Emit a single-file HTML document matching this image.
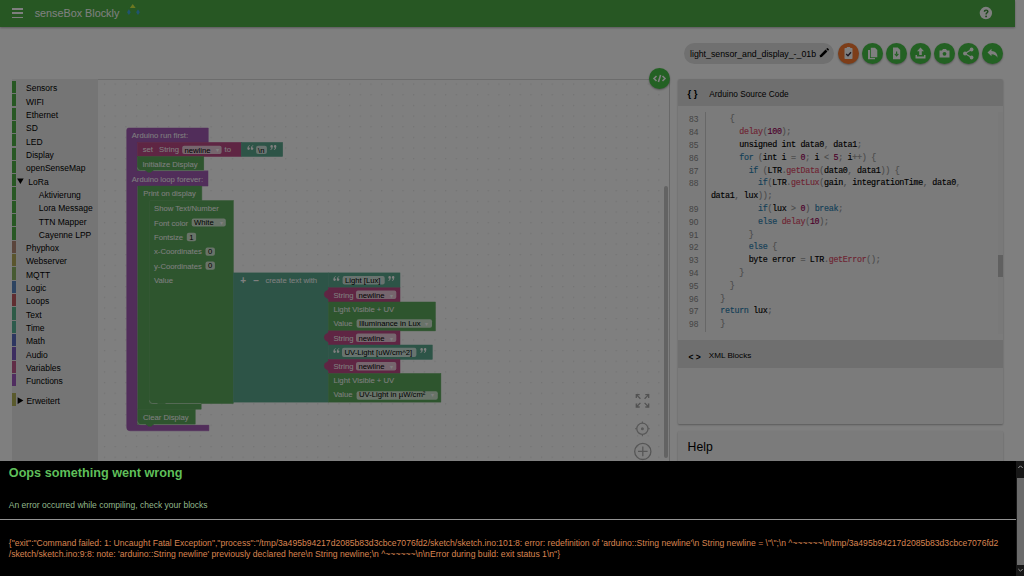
<!DOCTYPE html><html><head><meta charset="utf-8"><style>
*{box-sizing:border-box;margin:0;padding:0}
html,body{width:1024px;height:576px;overflow:hidden;background:#fff;font-family:"Liberation Sans",sans-serif;position:relative}
.t{position:absolute;white-space:nowrap}
.a{position:absolute}
#hdr{position:absolute;left:0;top:0;width:1015px;height:26.6px;background:#4eaf47;box-shadow:0 1px 2px rgba(0,0,0,.3)}
.ham{position:absolute;left:12px;width:11px;height:1.6px;background:#fff}
.fab{position:absolute;top:42.7px;width:21px;height:21px;border-radius:50%;background:#47c247;box-shadow:0 1px 2px rgba(0,0,0,.35)}
.fab svg{position:absolute;left:0;top:0}
#pill{position:absolute;left:684px;top:42.7px;width:150px;height:21px;border-radius:11px;background:#e0e0e0}
#tb{position:absolute;left:11.5px;top:79.3px;width:86.5px;height:382px;background:#eaeaea}
.cat{position:absolute;left:12px;width:4px;height:12.3px}
#ws{position:absolute;left:98px;top:79px;width:572px;height:382px;background:#fff;border-top:1px solid #d8d8d8;border-right:1px solid #d0d0d0}
.card{position:absolute;background:#f6f6f6;box-shadow:0 1px 2px rgba(0,0,0,.3);border-radius:1px}
.code{font-family:"Liberation Mono",monospace;font-size:8.4px;letter-spacing:-0.32px;color:#000;-webkit-text-stroke:0.15px currentColor}
.ln{font-family:"Liberation Sans",sans-serif;font-size:8.4px;color:#8a8a8a;text-align:right;width:20.3px}
.kw{color:#2a80b0}.fn{color:#dd4a68}.nm{color:#990055}.pu{color:#999}.op{color:#999}
#overlay{position:absolute;left:0;top:0;width:1024px;height:576px;background:rgba(0,0,0,.5)}
#modal{position:absolute;left:0;top:461px;width:1024px;height:115px;background:#000}
</style></head><body>
<div id="hdr">
<div class="ham" style="top:8.1px"></div>
<div class="ham" style="top:12.3px"></div>
<div class="ham" style="top:16.5px"></div>
</div>
<div class="t " style="left:34.70px;top:3.20px;font-size:10.8px;color:#fff;line-height:20px;">senseBox Blockly</div>
<svg class="a" style="left:120px;top:0px" width="24" height="20" viewBox="0 0 24 20"><polygon points="9.9,8.1 15.6,8.1 12.75,3.9" fill="#d8f040"/><polygon points="8.9,9.3 10.7,12.2 8.9,15.1 7.1,12.2" fill="#40a8e0"/><polygon points="18,9.3 19.8,12.2 18,15.1 16.2,12.2" fill="#40a8e0"/></svg>
<svg class="a" style="left:976px;top:3px" width="20" height="20" viewBox="0 0 20 20"><circle cx="9.9" cy="10.05" r="6.2" fill="#fff"/><path d="M7.6 8.6 Q7.6 6.4 10.1 6.4 Q12.6 6.5 12.6 8.5 Q12.6 9.7 11.3 10.4 Q10.8 10.8 10.8 11.6 L9.4 11.6 Q9.3 10.2 10.3 9.6 Q11 9.2 11 8.6 Q11 7.8 10.1 7.8 Q9.2 7.8 9.2 8.9 Z" fill="#3f8f3a"/><circle cx="10.1" cy="13.4" r="0.95" fill="#3f8f3a"/></svg>
<div id="pill"></div>
<div class="t " style="left:690.00px;top:43.50px;font-size:8.75px;color:#000;line-height:20px;">light_sensor_and_display_-_01b</div>
<svg class="a" style="left:818px;top:47px" width="12" height="12" viewBox="0 0 12 12"><path d="M2 8.2 L7.6 2.6 L9.4 4.4 L3.8 10 L1.8 10.2 Z" fill="#000"/><path d="M8.2 2 L9 1.2 Q9.4 0.9 9.8 1.2 L10.8 2.2 Q11.1 2.6 10.8 3 L10 3.8 Z" fill="#000"/></svg>
<div class="fab" style="left:838.0px;background:#fa7a30"><svg width="21" height="21" viewBox="0 0 21 21"><rect x="6.5" y="5" width="8" height="11" rx="0.8" fill="#fff"/><rect x="8.8" y="4" width="3.4" height="2" rx="0.5" fill="#fff"/><path d="M8.2 11 L10 12.8 L13 9.3" stroke="#3a2d3f" stroke-width="1.4" fill="none"/></svg></div>
<div class="fab" style="left:862.0px;background:#47c247"><svg width="21" height="21" viewBox="0 0 21 21"><path d="M6 7 L8 7 L8 15 L13 15 L13 16.3 L6 16.3 Z" fill="#fff"/><path d="M8.8 4.7 L13 4.7 L15.3 7 L15.3 14.2 L8.8 14.2 Z" fill="#fff"/></svg></div>
<div class="fab" style="left:886.0px;background:#47c247"><svg width="21" height="21" viewBox="0 0 21 21"><path d="M7 4.5 L11.8 4.5 L14.2 7 L14.2 16.3 L7 16.3 Z" fill="#fff"/><path d="M10.6 8.5 L10.6 11.5 M8.8 10.8 L10.6 12.8 L12.4 10.8" stroke="#47c247" stroke-width="1.2" fill="none"/></svg></div>
<div class="fab" style="left:910.0px;background:#47c247"><svg width="21" height="21" viewBox="0 0 21 21"><path d="M10.5 4.5 L14 8.2 L11.8 8.2 L11.8 12 L9.2 12 L9.2 8.2 L7 8.2 Z" fill="#fff"/><path d="M5.5 12 L7 12 L7 13.6 L14 13.6 L14 12 L15.5 12 L15.5 15.5 L5.5 15.5 Z" fill="#fff"/></svg></div>
<div class="fab" style="left:934.0px;background:#47c247"><svg width="21" height="21" viewBox="0 0 21 21"><path d="M5.5 7.5 L8 7.5 L9 6 L12 6 L13 7.5 L15.5 7.5 L15.5 14.5 L5.5 14.5 Z" fill="#fff"/><circle cx="10.5" cy="10.8" r="1.9" fill="#47c247"/></svg></div>
<div class="fab" style="left:958.0px;background:#47c247"><svg width="21" height="21" viewBox="0 0 21 21"><circle cx="13.6" cy="6.5" r="1.9" fill="#fff"/><circle cx="7" cy="10.5" r="1.9" fill="#fff"/><circle cx="13.6" cy="14.5" r="1.9" fill="#fff"/><path d="M13.6 6.5 L7 10.5 L13.6 14.5" stroke="#fff" stroke-width="1.3" fill="none"/></svg></div>
<div class="fab" style="left:982.0px;background:#47c247"><svg width="21" height="21" viewBox="0 0 21 21"><path d="M5.5 9.5 L9.5 5.8 L9.5 8 Q15.5 8 15.5 14.8 Q13.8 11.2 9.5 11.2 L9.5 13.3 Z" fill="#fff"/></svg></div>
<div id="tb"></div>
<div class="cat" style="top:80.85px;background:#4eaf47"></div>
<div class="t " style="left:26.00px;top:78.20px;font-size:8.5px;color:#000;line-height:20px;">Sensors</div>
<div class="cat" style="top:94.18px;background:#4eaf47"></div>
<div class="t " style="left:26.00px;top:91.53px;font-size:8.5px;color:#000;line-height:20px;">WIFI</div>
<div class="cat" style="top:107.51px;background:#4eaf47"></div>
<div class="t " style="left:26.00px;top:104.86px;font-size:8.5px;color:#000;line-height:20px;">Ethernet</div>
<div class="cat" style="top:120.84px;background:#4eaf47"></div>
<div class="t " style="left:26.00px;top:118.19px;font-size:8.5px;color:#000;line-height:20px;">SD</div>
<div class="cat" style="top:134.17px;background:#4eaf47"></div>
<div class="t " style="left:26.00px;top:131.52px;font-size:8.5px;color:#000;line-height:20px;">LED</div>
<div class="cat" style="top:147.50px;background:#4eaf47"></div>
<div class="t " style="left:26.00px;top:144.85px;font-size:8.5px;color:#000;line-height:20px;">Display</div>
<div class="cat" style="top:160.83px;background:#4eaf47"></div>
<div class="t " style="left:26.00px;top:158.18px;font-size:8.5px;color:#000;line-height:20px;">openSenseMap</div>
<div class="cat" style="top:174.16px;background:#4eaf47"></div>
<svg class="a" style="left:0;top:0" width="30" height="200"><polygon points="17.1,178.6 23.7,178.6 20.4,183.9" fill="#000"/></svg>
<div class="t " style="left:28.30px;top:171.51px;font-size:8.5px;color:#000;line-height:20px;">LoRa</div>
<div class="cat" style="top:187.49px;background:#4eaf47"></div>
<div class="t " style="left:38.80px;top:184.84px;font-size:8.5px;color:#000;line-height:20px;">Aktivierung</div>
<div class="cat" style="top:200.82px;background:#4eaf47"></div>
<div class="t " style="left:38.80px;top:198.17px;font-size:8.5px;color:#000;line-height:20px;">Lora Message</div>
<div class="cat" style="top:214.15px;background:#4eaf47"></div>
<div class="t " style="left:38.80px;top:211.50px;font-size:8.5px;color:#000;line-height:20px;">TTN Mapper</div>
<div class="cat" style="top:227.48px;background:#4eaf47"></div>
<div class="t " style="left:38.80px;top:224.83px;font-size:8.5px;color:#000;line-height:20px;">Cayenne LPP</div>
<div class="cat" style="top:240.81px;background:#b48a78"></div>
<div class="t " style="left:26.00px;top:238.16px;font-size:8.5px;color:#000;line-height:20px;">Phyphox</div>
<div class="cat" style="top:254.14px;background:#b4aa5a"></div>
<div class="t " style="left:26.00px;top:251.49px;font-size:8.5px;color:#000;line-height:20px;">Webserver</div>
<div class="cat" style="top:267.47px;background:#8cb464"></div>
<div class="t " style="left:26.00px;top:264.82px;font-size:8.5px;color:#000;line-height:20px;">MQTT</div>
<div class="cat" style="top:280.80px;background:#5b86c0"></div>
<div class="t " style="left:26.00px;top:278.15px;font-size:8.5px;color:#000;line-height:20px;">Logic</div>
<div class="cat" style="top:294.13px;background:#c05a60"></div>
<div class="t " style="left:26.00px;top:291.48px;font-size:8.5px;color:#000;line-height:20px;">Loops</div>
<div class="cat" style="top:307.46px;background:#5bb48c"></div>
<div class="t " style="left:26.00px;top:304.81px;font-size:8.5px;color:#000;line-height:20px;">Text</div>
<div class="cat" style="top:320.79px;background:#5bb498"></div>
<div class="t " style="left:26.00px;top:318.14px;font-size:8.5px;color:#000;line-height:20px;">Time</div>
<div class="cat" style="top:334.12px;background:#5b6cc0"></div>
<div class="t " style="left:26.00px;top:331.47px;font-size:8.5px;color:#000;line-height:20px;">Math</div>
<div class="cat" style="top:347.45px;background:#7a5bc0"></div>
<div class="t " style="left:26.00px;top:344.80px;font-size:8.5px;color:#000;line-height:20px;">Audio</div>
<div class="cat" style="top:360.78px;background:#c05a8c"></div>
<div class="t " style="left:26.00px;top:358.13px;font-size:8.5px;color:#000;line-height:20px;">Variables</div>
<div class="cat" style="top:374.11px;background:#a05bc0"></div>
<div class="t " style="left:26.00px;top:371.46px;font-size:8.5px;color:#000;line-height:20px;">Functions</div>
<div class="cat" style="top:393.25px;background:#b4b45a"></div>
<svg class="a" style="left:0;top:380px" width="30" height="40"><polygon points="17.6,17.3 17.6,23.9 23.4,20.6" fill="#000"/></svg>
<div class="t " style="left:26.40px;top:390.60px;font-size:8.5px;color:#000;line-height:20px;">Erweitert</div>
<div id="ws"></div>
<svg class="a" style="left:99px;top:80px" width="570" height="381"><defs><pattern id="g" x="0" y="0" width="10.66" height="10.66" patternUnits="userSpaceOnUse" patternTransform="translate(4.9,14.15)"><rect x="0" y="0" width="1.3" height="1.3" fill="#e6e6e6"/></pattern></defs><rect width="570" height="381" fill="url(#g)"/></svg>
<svg class="a" style="left:0;top:0" width="1024" height="576"><path d="M126.7 130 Q126.7 128 128.7 128 L208.3 128 L208.3 142.4 L137.4 142.4 L137.4 170.6 L208 170.6 L208 186.1 L137.4 186.1 L137.4 425.1 L208.9 425.1 L208.9 430.8 L130 430.8 Q126.7 430.8 126.7 427.5 Z" fill="#a25ab4" stroke="#a25ab4" stroke-width="0.5" /><rect x="137.4" y="142.4" width="103.80" height="14.10" fill="#be4a86" stroke="#be4a86" stroke-width="0.5" /><rect x="241.2" y="142.4" width="41.50" height="14.10" fill="#5aa88e" stroke="#5aa88e" stroke-width="0.5" /><rect x="137.4" y="156.5" width="66.40" height="14.10" fill="#5daa5d" stroke="#5daa5d" stroke-width="0.5" /><path d="M137.8 186.1 L201.8 186.1 L201.8 200.6 L149.5 200.6 L149.5 403.5 L201.2 403.5 L201.2 409.2 L137.8 409.2 Z" fill="#5daa5d" stroke="#5daa5d" stroke-width="0.5" /><rect x="149.5" y="200.6" width="83.80" height="202.90" fill="#5daa5d" stroke="#5daa5d" stroke-width="0.5" /><rect x="137.8" y="409.2" width="57.40" height="15.40" fill="#5daa5d" stroke="#5daa5d" stroke-width="0.5" /><rect x="233.3" y="272.9" width="95.20" height="129.20" fill="#5aa88e" stroke="#5aa88e" stroke-width="0.5" /><rect x="328.5" y="272.9" width="71.50" height="14.90" fill="#5aa88e" stroke="#5aa88e" stroke-width="0.5" /><rect x="328.5" y="287.8" width="71.50" height="14.20" fill="#be4a86" stroke="#be4a86" stroke-width="0.5" /><path d="M329 289.2 L325.2 291.7 Q323.2 294.29999999999995 325.2 296.9 L329 299.4 Z" fill="#be4a86" stroke="#be4a86" stroke-width="0.5" /><rect x="328.5" y="302" width="106.90" height="28.90" fill="#5daa5d" stroke="#5daa5d" stroke-width="0.5" /><rect x="328.5" y="330.9" width="71.50" height="14.10" fill="#be4a86" stroke="#be4a86" stroke-width="0.5" /><path d="M329 332.2 L325.2 334.7 Q323.2 337.29999999999995 325.2 339.9 L329 342.4 Z" fill="#be4a86" stroke="#be4a86" stroke-width="0.5" /><rect x="328.5" y="345" width="103.80" height="14.40" fill="#5aa88e" stroke="#5aa88e" stroke-width="0.5" /><rect x="328.5" y="359.4" width="71.50" height="14.10" fill="#be4a86" stroke="#be4a86" stroke-width="0.5" /><path d="M329 360.7 L325.2 363.2 Q323.2 365.79999999999995 325.2 368.4 L329 370.9 Z" fill="#be4a86" stroke="#be4a86" stroke-width="0.5" /><rect x="328.5" y="373.5" width="112.40" height="28.60" fill="#5daa5d" stroke="#5daa5d" stroke-width="0.5" /><path d="M145.9 170.29999999999998 L147.9 172.2 L150.9 172.2 L152.9 170.29999999999998 Z" fill="#5daa5d" stroke="#5daa5d" stroke-width="0.5" /><path d="M146.3 424.3 L148.3 426.20000000000005 L151.3 426.20000000000005 L153.3 424.3 Z" fill="#5daa5d" stroke="#5daa5d" stroke-width="0.5" /><path d="M137.4 167.6 Q137.4 170.6 140.4 170.6 L145.4 170.6 M153.4 170.6 L208 170.6" stroke="#ffffff" stroke-opacity="0.5" stroke-width="0.9" fill="none"/><path d="M137.6 421.6 Q137.6 424.6 140.6 424.6 L145.8 424.6 M153.8 424.6 L208.9 424.6" stroke="#ffffff" stroke-opacity="0.5" stroke-width="0.9" fill="none"/><path d="M149.5 400.5 Q149.5 403.5 152.5 403.5 L157.5 403.5 M165.5 403.5 L201.2 403.5" stroke="#ffffff" stroke-opacity="0.5" stroke-width="0.9" fill="none"/><rect x="182.2" y="145.75" width="39.40" height="8.25" rx="2" fill="#fff" fill-opacity="0.72"/><rect x="256.1" y="145.75" width="10.80" height="8.25" rx="2" fill="#fff" fill-opacity="0.72"/><rect x="191.7" y="218.5" width="34.10" height="8.10" rx="2" fill="#fff" fill-opacity="0.72"/><rect x="186.8" y="232.8" width="9.30" height="8.40" rx="2" fill="#fff" fill-opacity="0.72"/><rect x="205.5" y="247.4" width="9.40" height="8.35" rx="2" fill="#fff" fill-opacity="0.72"/><rect x="205.5" y="261.5" width="9.40" height="8.30" rx="2" fill="#fff" fill-opacity="0.72"/><rect x="342.6" y="276" width="42.10" height="8.50" rx="2" fill="#fff" fill-opacity="0.72"/><rect x="356" y="290.6" width="40.30" height="8.50" rx="2" fill="#fff" fill-opacity="0.72"/><rect x="356.6" y="319.3" width="75.40" height="8.50" rx="2" fill="#fff" fill-opacity="0.72"/><rect x="356" y="333.6" width="40.30" height="8.50" rx="2" fill="#fff" fill-opacity="0.72"/><rect x="342" y="347.8" width="74.40" height="9.20" rx="2" fill="#fff" fill-opacity="0.72"/><rect x="356" y="362.1" width="40.30" height="8.50" rx="2" fill="#fff" fill-opacity="0.72"/><rect x="356.6" y="391.2" width="81.20" height="8.50" rx="2" fill="#fff" fill-opacity="0.72"/></svg>
<div class="t " style="left:131.70px;top:125.70px;font-size:7.7px;color:#fff;line-height:20px;">Arduino run first:</div>
<div class="t " style="left:142.70px;top:140.30px;font-size:7.7px;color:#fff;line-height:20px;">set</div>
<div class="t " style="left:159.00px;top:140.30px;font-size:7.7px;color:#fff;line-height:20px;">String</div>
<div class="t " style="left:184.50px;top:140.50px;font-size:7.7px;color:#000;line-height:20px;">newline</div>
<div class="t " style="left:215.50px;top:140.30px;font-size:5.5px;color:#fff;line-height:20px;">&#9662;</div>
<div class="t " style="left:224.60px;top:140.30px;font-size:7.7px;color:#fff;line-height:20px;">to</div>
<svg class="a" style="left:246.8px;top:145.4px" width="7" height="6" viewBox="0 0 7 6"><g fill="#fff"><path d="M0.3 3.6 Q0.3 1.2 2.6 0.1 L2.9 0.6 Q1.6 1.4 1.5 2.3 Q2.9 2.4 2.9 3.6 Q2.8 5 1.5 5 Q0.3 5 0.3 3.6 Z"/><g transform="translate(3.5,0)"><path d="M0.3 3.6 Q0.3 1.2 2.6 0.1 L2.9 0.6 Q1.6 1.4 1.5 2.3 Q2.9 2.4 2.9 3.6 Q2.8 5 1.5 5 Q0.3 5 0.3 3.6 Z"/></g></g></svg>
<div class="t " style="left:258.00px;top:140.50px;font-size:7.7px;color:#000;line-height:20px;">\n</div>
<svg class="a" style="left:269.9px;top:145.4px" width="7" height="6" viewBox="0 0 7 6"><g fill="#fff"><path d="M2.9 1.4 Q2.9 3.8 0.6 4.9 L0.3 4.4 Q1.6 3.6 1.7 2.7 Q0.3 2.6 0.3 1.4 Q0.4 0 1.7 0 Q2.9 0 2.9 1.4 Z"/><g transform="translate(3.5,0)"><path d="M2.9 1.4 Q2.9 3.8 0.6 4.9 L0.3 4.4 Q1.6 3.6 1.7 2.7 Q0.3 2.6 0.3 1.4 Q0.4 0 1.7 0 Q2.9 0 2.9 1.4 Z"/></g></g></svg>
<div class="t " style="left:142.40px;top:154.90px;font-size:7.7px;color:#fff;line-height:20px;">Initialize Display</div>
<div class="t " style="left:131.70px;top:170.40px;font-size:7.7px;color:#fff;line-height:20px;">Arduino loop forever:</div>
<div class="t " style="left:143.20px;top:184.20px;font-size:7.7px;color:#fff;line-height:20px;">Print on display</div>
<div class="t " style="left:154.00px;top:199.30px;font-size:7.7px;color:#fff;line-height:20px;">Show Text/Number</div>
<div class="t " style="left:154.00px;top:213.60px;font-size:7.7px;color:#fff;line-height:20px;">Font color</div>
<div class="t " style="left:194.00px;top:213.30px;font-size:7.7px;color:#000;line-height:20px;">White</div>
<div class="t " style="left:219.50px;top:213.10px;font-size:5.5px;color:#fff;line-height:20px;">&#9662;</div>
<div class="t " style="left:154.00px;top:227.60px;font-size:7.7px;color:#fff;line-height:20px;">Fontsize</div>
<div class="t " style="left:189.30px;top:227.60px;font-size:7.7px;color:#000;line-height:20px;">1</div>
<div class="t " style="left:154.00px;top:242.30px;font-size:7.7px;color:#fff;line-height:20px;">x-Coordinates</div>
<div class="t " style="left:208.00px;top:242.20px;font-size:7.7px;color:#000;line-height:20px;">0</div>
<div class="t " style="left:154.00px;top:256.60px;font-size:7.7px;color:#fff;line-height:20px;">y-Coordinates</div>
<div class="t " style="left:208.00px;top:256.30px;font-size:7.7px;color:#000;line-height:20px;">0</div>
<div class="t " style="left:154.00px;top:270.90px;font-size:7.7px;color:#fff;line-height:20px;">Value</div>
<div class="t " style="left:240.20px;top:270.70px;font-size:10px;color:#fff;line-height:20px;"><b>+</b></div>
<div class="t " style="left:253.20px;top:270.50px;font-size:10px;color:#fff;line-height:20px;"><b>&#8211;</b></div>
<div class="t " style="left:265.40px;top:270.90px;font-size:7.7px;color:#fff;line-height:20px;">create text with</div>
<svg class="a" style="left:332.8px;top:276.2px" width="7" height="6" viewBox="0 0 7 6"><g fill="#fff"><path d="M0.3 3.6 Q0.3 1.2 2.6 0.1 L2.9 0.6 Q1.6 1.4 1.5 2.3 Q2.9 2.4 2.9 3.6 Q2.8 5 1.5 5 Q0.3 5 0.3 3.6 Z"/><g transform="translate(3.5,0)"><path d="M0.3 3.6 Q0.3 1.2 2.6 0.1 L2.9 0.6 Q1.6 1.4 1.5 2.3 Q2.9 2.4 2.9 3.6 Q2.8 5 1.5 5 Q0.3 5 0.3 3.6 Z"/></g></g></svg>
<div class="t " style="left:345.00px;top:270.90px;font-size:7.7px;color:#000;line-height:20px;">Light [Lux]</div>
<svg class="a" style="left:387.7px;top:276.2px" width="7" height="6" viewBox="0 0 7 6"><g fill="#fff"><path d="M2.9 1.4 Q2.9 3.8 0.6 4.9 L0.3 4.4 Q1.6 3.6 1.7 2.7 Q0.3 2.6 0.3 1.4 Q0.4 0 1.7 0 Q2.9 0 2.9 1.4 Z"/><g transform="translate(3.5,0)"><path d="M2.9 1.4 Q2.9 3.8 0.6 4.9 L0.3 4.4 Q1.6 3.6 1.7 2.7 Q0.3 2.6 0.3 1.4 Q0.4 0 1.7 0 Q2.9 0 2.9 1.4 Z"/></g></g></svg>
<div class="t " style="left:333.40px;top:285.60px;font-size:7.7px;color:#fff;line-height:20px;">String</div>
<div class="t " style="left:358.50px;top:285.50px;font-size:7.7px;color:#000;line-height:20px;">newline</div>
<div class="t " style="left:389.50px;top:285.60px;font-size:5.5px;color:#fff;line-height:20px;">&#9662;</div>
<div class="t " style="left:333.40px;top:328.60px;font-size:7.7px;color:#fff;line-height:20px;">String</div>
<div class="t " style="left:358.50px;top:328.50px;font-size:7.7px;color:#000;line-height:20px;">newline</div>
<div class="t " style="left:389.50px;top:328.60px;font-size:5.5px;color:#fff;line-height:20px;">&#9662;</div>
<div class="t " style="left:333.40px;top:357.10px;font-size:7.7px;color:#fff;line-height:20px;">String</div>
<div class="t " style="left:358.50px;top:357.00px;font-size:7.7px;color:#000;line-height:20px;">newline</div>
<div class="t " style="left:389.50px;top:357.10px;font-size:5.5px;color:#fff;line-height:20px;">&#9662;</div>
<div class="t " style="left:333.40px;top:299.90px;font-size:7.7px;color:#fff;line-height:20px;">Light Visible + UV</div>
<div class="t " style="left:333.40px;top:314.10px;font-size:7.7px;color:#fff;line-height:20px;">Value</div>
<div class="t " style="left:359.00px;top:314.10px;font-size:7.7px;color:#000;line-height:20px;">Illuminance in Lux</div>
<div class="t " style="left:425.00px;top:313.90px;font-size:5.5px;color:#fff;line-height:20px;">&#9662;</div>
<svg class="a" style="left:332.8px;top:348.4px" width="7" height="6" viewBox="0 0 7 6"><g fill="#fff"><path d="M0.3 3.6 Q0.3 1.2 2.6 0.1 L2.9 0.6 Q1.6 1.4 1.5 2.3 Q2.9 2.4 2.9 3.6 Q2.8 5 1.5 5 Q0.3 5 0.3 3.6 Z"/><g transform="translate(3.5,0)"><path d="M0.3 3.6 Q0.3 1.2 2.6 0.1 L2.9 0.6 Q1.6 1.4 1.5 2.3 Q2.9 2.4 2.9 3.6 Q2.8 5 1.5 5 Q0.3 5 0.3 3.6 Z"/></g></g></svg>
<div class="t " style="left:344.50px;top:343.00px;font-size:7.7px;color:#000;line-height:20px;">UV-Light [uW/cm^2]</div>
<svg class="a" style="left:420px;top:348.4px" width="7" height="6" viewBox="0 0 7 6"><g fill="#fff"><path d="M2.9 1.4 Q2.9 3.8 0.6 4.9 L0.3 4.4 Q1.6 3.6 1.7 2.7 Q0.3 2.6 0.3 1.4 Q0.4 0 1.7 0 Q2.9 0 2.9 1.4 Z"/><g transform="translate(3.5,0)"><path d="M2.9 1.4 Q2.9 3.8 0.6 4.9 L0.3 4.4 Q1.6 3.6 1.7 2.7 Q0.3 2.6 0.3 1.4 Q0.4 0 1.7 0 Q2.9 0 2.9 1.4 Z"/></g></g></svg>
<div class="t " style="left:333.40px;top:371.10px;font-size:7.7px;color:#fff;line-height:20px;">Light Visible + UV</div>
<div class="t " style="left:333.40px;top:385.30px;font-size:7.7px;color:#fff;line-height:20px;">Value</div>
<div class="t " style="left:359.00px;top:385.30px;font-size:7.7px;color:#000;line-height:20px;">UV-Light in &#181;W/cm&#178;</div>
<div class="t " style="left:430.50px;top:385.10px;font-size:5.5px;color:#fff;line-height:20px;">&#9662;</div>
<div class="t " style="left:142.90px;top:407.80px;font-size:7.7px;color:#fff;line-height:20px;">Clear Display</div>
<div class="a" style="left:663.5px;top:186px;width:4px;height:272px;background:#c6c6c6;border-radius:2px"></div>
<svg class="a" style="left:630px;top:388px" width="24" height="76" viewBox="0 0 24 76"><g stroke="#a4a4a4" stroke-width="1.3" fill="none"><path d="M6.3 10 L6.3 6.6 L9.7 6.6 M6.8 7.1 L10.4 10.7"/><path d="M18.7 10 L18.7 6.6 L15.3 6.6 M18.2 7.1 L14.6 10.7"/><path d="M6.3 15.6 L6.3 19 L9.7 19 M6.8 18.5 L10.4 14.9"/><path d="M18.7 15.6 L18.7 19 L15.3 19 M18.2 18.5 L14.6 14.9"/></g><circle cx="12.4" cy="40.8" r="5.6" fill="none" stroke="#b0b0b0" stroke-width="1.3"/><circle cx="12.4" cy="40.8" r="1.5" fill="#b0b0b0"/><path d="M12.4 33.4 L12.4 35.2 M12.4 46.4 L12.4 48.2 M5 40.8 L6.8 40.8 M18 40.8 L19.8 40.8" stroke="#b0b0b0" stroke-width="1.1"/><circle cx="12.8" cy="63.4" r="8.1" fill="none" stroke="#acacac" stroke-width="1.3"/><path d="M12.8 58.6 L12.8 68.2 M8 63.4 L17.6 63.4" stroke="#acacac" stroke-width="1.3"/></svg>
<div class="fab" style="left:648.5px;top:68.25px;background:#47c247"><svg width="21" height="21" viewBox="0 0 21 21"><path d="M7.5 8 L5 10.5 L7.5 13 M13.5 8 L16 10.5 L13.5 13 M11.6 7 L9.4 14" stroke="#fff" stroke-width="1.6" fill="none"/></svg></div>
<div class="card" style="left:678px;top:79.2px;width:325.3px;height:344.5px"></div>
<div class="a" style="left:678px;top:79.2px;width:325.3px;height:26.7px;background:#dedede;border-radius:2px 2px 0 0"></div>
<div class="t " style="left:687.50px;top:84.30px;font-size:9.5px;color:#000;line-height:20px;"><b>{ }</b></div>
<div class="t " style="left:709.30px;top:84.00px;font-size:8.3px;color:#000;line-height:20px;">Arduino Source Code</div>
<div class="a" style="left:678px;top:340px;width:325.3px;height:28.4px;background:#dedede"></div>
<div class="t " style="left:688.50px;top:346.50px;font-size:8.5px;color:#000;line-height:20px;"><b>&lt; &gt;</b></div>
<div class="t " style="left:708.80px;top:346.35px;font-size:8.1px;color:#000;line-height:20px;">XML Blocks</div>
<div class="card" style="left:678px;top:431.3px;width:325.3px;height:60px"></div>
<div class="t " style="left:687.60px;top:437.30px;font-size:12.2px;color:#000;line-height:20px;">Help</div>
<div class="a" style="left:704.5px;top:112px;width:1px;height:220px;background:#cfcfcf"></div>
<div class="a" style="left:998.3px;top:112px;width:5px;height:222px;background:#f2f2f2"></div>
<div class="a" style="left:998.4px;top:254.9px;width:4.8px;height:22.4px;background:#c0c0c0"></div>
<div class="t ln" style="left:678px;top:109.30px;line-height:20px">83</div>
<div class="t code" style="left:729.78px;top:109.30px;line-height:20px"><span class="pu">{</span></div>
<div class="t ln" style="left:678px;top:122.10px;line-height:20px">84</div>
<div class="t code" style="left:739.22px;top:122.10px;line-height:20px"><span class="fn">delay</span><span class="pu">(</span><span class="nm">100</span><span class="pu">);</span></div>
<div class="t ln" style="left:678px;top:134.90px;line-height:20px">85</div>
<div class="t code" style="left:739.22px;top:134.90px;line-height:20px">unsigned int data0<span class="pu">,</span> data1<span class="pu">;</span></div>
<div class="t ln" style="left:678px;top:147.70px;line-height:20px">86</div>
<div class="t code" style="left:739.22px;top:147.70px;line-height:20px"><span class="kw">for</span> <span class="pu">(</span>int i <span class="op">=</span> <span class="nm">0</span><span class="pu">;</span> i <span class="op">&lt;</span> <span class="nm">5</span><span class="pu">;</span> i<span class="op">++</span><span class="pu">)</span> <span class="pu">{</span></div>
<div class="t ln" style="left:678px;top:160.50px;line-height:20px">87</div>
<div class="t code" style="left:748.66px;top:160.50px;line-height:20px"><span class="kw">if</span> <span class="pu">(</span>LTR<span class="pu">.</span><span class="fn">getData</span><span class="pu">(</span>data0<span class="pu">,</span> data1<span class="pu">))</span> <span class="pu">{</span></div>
<div class="t ln" style="left:678px;top:173.30px;line-height:20px">88</div>
<div class="t code" style="left:758.10px;top:173.30px;line-height:20px"><span class="kw">if</span><span class="pu">(</span>LTR<span class="pu">.</span><span class="fn">getLux</span><span class="pu">(</span>gain<span class="pu">,</span> integrationTime<span class="pu">,</span> data0<span class="pu">,</span></div>
<div class="t code" style="left:710.90px;top:186.10px;line-height:20px">data1<span class="pu">,</span> lux<span class="pu">));</span></div>
<div class="t ln" style="left:678px;top:198.90px;line-height:20px">89</div>
<div class="t code" style="left:758.10px;top:198.90px;line-height:20px"><span class="kw">if</span><span class="pu">(</span>lux <span class="op">&gt;</span> <span class="nm">0</span><span class="pu">)</span> <span class="kw">break</span><span class="pu">;</span></div>
<div class="t ln" style="left:678px;top:211.70px;line-height:20px">90</div>
<div class="t code" style="left:758.10px;top:211.70px;line-height:20px"><span class="kw">else</span> <span class="fn">delay</span><span class="pu">(</span><span class="nm">10</span><span class="pu">);</span></div>
<div class="t ln" style="left:678px;top:224.50px;line-height:20px">91</div>
<div class="t code" style="left:748.66px;top:224.50px;line-height:20px"><span class="pu">}</span></div>
<div class="t ln" style="left:678px;top:237.30px;line-height:20px">92</div>
<div class="t code" style="left:748.66px;top:237.30px;line-height:20px"><span class="kw">else</span> <span class="pu">{</span></div>
<div class="t ln" style="left:678px;top:250.10px;line-height:20px">93</div>
<div class="t code" style="left:748.66px;top:250.10px;line-height:20px">byte error <span class="op">=</span> LTR<span class="pu">.</span><span class="fn">getError</span><span class="pu">();</span></div>
<div class="t ln" style="left:678px;top:262.90px;line-height:20px">94</div>
<div class="t code" style="left:739.22px;top:262.90px;line-height:20px"><span class="pu">}</span></div>
<div class="t ln" style="left:678px;top:275.70px;line-height:20px">95</div>
<div class="t code" style="left:729.78px;top:275.70px;line-height:20px"><span class="pu">}</span></div>
<div class="t ln" style="left:678px;top:288.50px;line-height:20px">96</div>
<div class="t code" style="left:720.34px;top:288.50px;line-height:20px"><span class="pu">}</span></div>
<div class="t ln" style="left:678px;top:301.30px;line-height:20px">97</div>
<div class="t code" style="left:720.34px;top:301.30px;line-height:20px"><span class="kw">return</span> lux<span class="pu">;</span></div>
<div class="t ln" style="left:678px;top:314.10px;line-height:20px">98</div>
<div class="t code" style="left:720.34px;top:314.10px;line-height:20px"><span class="pu">}</span></div>
<div id="overlay"></div>
<div id="modal"></div>
<div class="t " style="left:8.80px;top:462.70px;font-size:12.67px;color:#5fbf5a;line-height:20px;font-weight:bold;">Oops something went wrong</div>
<div class="t " style="left:8.80px;top:495.20px;font-size:8.53px;color:#92b88c;line-height:20px;">An error occurred while compiling, check your blocks</div>
<div class="a" style="left:0;top:518.9px;width:1015.5px;height:1.2px;background:#939393"></div>
<div class="t " style="left:8.80px;top:532.90px;font-size:8.6px;color:#d98552;line-height:20px;">{&quot;exit&quot;:&quot;Command failed: 1: Uncaught Fatal Exception&quot;,&quot;process&quot;:&quot;/tmp/3a495b94217d2085b83d3cbce7076fd2/sketch/sketch.ino:101:8: error: redefinition of &#x27;arduino::String newline&#x27;\n String newline = \&quot;\&quot;;\n ^~~~~~~\n/tmp/3a495b94217d2085b83d3cbce7076fd2</div>
<div class="t " style="left:8.80px;top:544.10px;font-size:8.64px;color:#d98552;line-height:20px;">/sketch/sketch.ino:9:8: note: &#x27;arduino::String newline&#x27; previously declared here\n String newline;\n ^~~~~~~\n\nError during build: exit status 1\n&quot;}</div>
<div class="a" style="left:1015.5px;top:461px;width:8.5px;height:115px;background:#171717"></div>
<div class="a" style="left:1016.5px;top:478.4px;width:7px;height:86.6px;background:#6b6b6b"></div>
<svg class="a" style="left:1015.5px;top:461px" width="9" height="115"><path d="M2.3 7 L4.5 4.8 L6.7 7" stroke="#9a9a9a" stroke-width="1" fill="none"/><path d="M2.3 108 L4.5 110.2 L6.7 108" stroke="#9a9a9a" stroke-width="1" fill="none"/></svg>
</body></html>
